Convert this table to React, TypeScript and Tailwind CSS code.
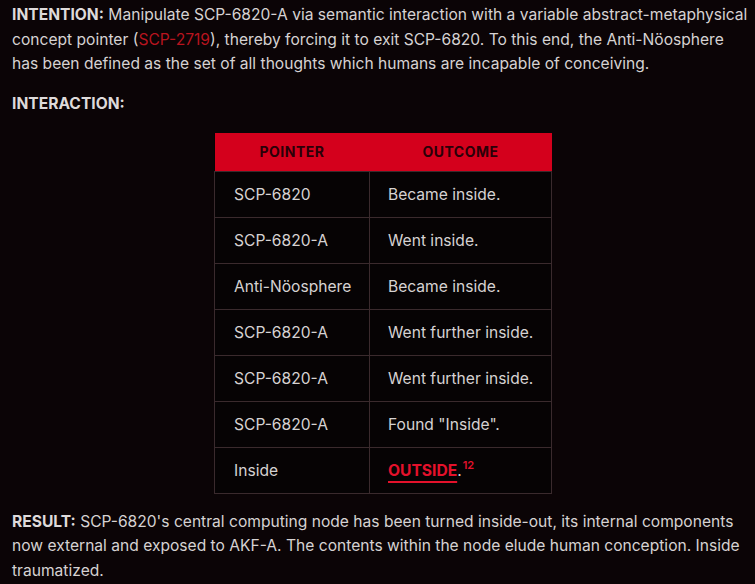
export default function App() {
  const rows: [string, React.ReactNode][] = [
    ['SCP-6820', 'Became inside.'],
    ['SCP-6820-A', 'Went inside.'],
    ['Anti-Nöosphere', 'Became inside.'],
    ['SCP-6820-A', 'Went further inside.'],
    ['SCP-6820-A', 'Went further inside.'],
    ['SCP-6820-A', 'Found "Inside".'],
    [
      'Inside',
      <>
        <span className="font-bold text-[#e4112b] underline decoration-2 underline-offset-[5px]">OUTSIDE</span>.
        <sup className="text-[#e4112b] text-[11px] font-semibold -top-[7px] ml-[1px]">12</sup>
      </>,
    ],
  ];

  return (
    <div
      className="min-h-[584px] w-[755px] overflow-hidden bg-[#0b0406] text-[#d6d2d2] px-3 pt-[3px] text-[15.6px] leading-[24.5px]"
      style={{ fontFamily: 'Inter, "Noto Sans", sans-serif' }}
    >
      <p className="whitespace-nowrap">
        <b className="font-bold text-[#dedada]">INTENTION:</b> Manipulate SCP-6820-A via semantic interaction with a variable abstract-metaphysical
        <br />
        concept pointer (<span className="text-[#b8141f]">SCP-2719</span>), thereby forcing it to exit SCP-6820. To this end, the Anti-Nöosphere
        <br />
        has been defined as the set of all thoughts which humans are incapable of conceiving.
      </p>
      <p className="mt-[15px]">
        <b className="font-bold text-[#dedada]">INTERACTION:</b>
      </p>
      <div className="flex justify-center mt-[17px] pl-[11px]">
        <table className="border-collapse w-[338px] bg-[#060304]">
          <thead>
            <tr className="bg-[#d4001c] h-[38px]">
              <th className="w-[155px] text-[14px] font-bold tracking-[0.5px] text-[#2a0008] text-center">POINTER</th>
              <th className="text-[14px] font-bold tracking-[0.5px] text-[#2a0008] text-center">OUTCOME</th>
            </tr>
          </thead>
          <tbody>
            {rows.map(([a, b], i) => (
              <tr key={i} className="h-[46px]">
                <td className="border border-[#3a2a2d] pl-[19px] pt-[2px]">{a}</td>
                <td className="border border-[#3a2a2d] pl-[18px] pt-[2px]">{b}</td>
              </tr>
            ))}
          </tbody>
        </table>
      </div>
      <p className="mt-[16px] whitespace-nowrap">
        <b className="font-bold text-[#dedada]">RESULT:</b> SCP-6820's central computing node has been turned inside-out, its internal components
        <br />
        now external and exposed to AKF-A. The contents within the node elude human conception. Inside
        <br />
        traumatized.
      </p>
    </div>
  );
}
